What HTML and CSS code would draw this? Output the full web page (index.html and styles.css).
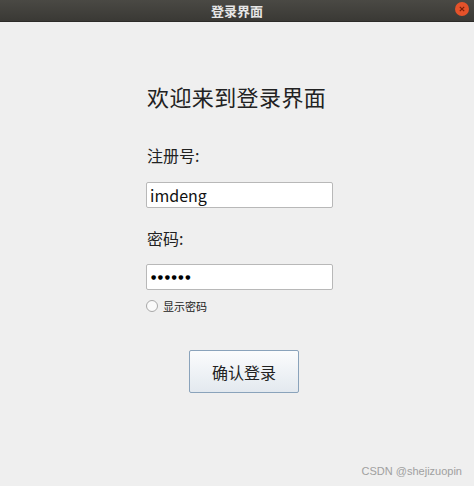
FILE: index.html
```html
<!DOCTYPE html>
<html>
<head>
<meta charset="utf-8">
<link rel="stylesheet" href="styles.css">
</head>
<body>
<div class="window">
  <div class="titlebar">
    <span class="title">登录界面</span>
    <span class="close">
      <svg width="14" height="14" viewBox="0 0 14 14"><circle cx="7" cy="7" r="7" fill="#e5522a"/><path d="M4.8 4.8 L9.2 9.2 M9.2 4.8 L4.8 9.2" stroke="#7a1e08" stroke-width="1.2"/></svg>
    </span>
  </div>
  <div class="content">
    <h1 class="heading">欢迎来到登录界面</h1>
    <div class="label label-user">注册号:</div>
    <div class="input">imdeng</div>
    <div class="label label-pass">密码:</div>
    <div class="input pass"><span class="dots">●●●●●●</span></div>
    <div class="check">
      <span class="radio"></span>
      <span class="check-text">显示密码</span>
    </div>
    <div class="btn-row">
      <div class="btn">确认登录</div>
    </div>
  </div>
  <div class="watermark">CSDN @shejizuopin</div>
</div>
</body>
</html>
```

FILE: styles.css
```css
html, body {
  margin: 0;
  padding: 0;
}
body {
  width: 474px;
  height: 486px;
  overflow: hidden;
  background: #efefef;
  font-family: "Noto Sans CJK SC", "Noto Sans", sans-serif;
}
.window {
  position: relative;
  width: 474px;
  height: 486px;
  display: flex;
  flex-direction: column;
}
.titlebar {
  height: 21px;
  background: linear-gradient(#4a4944, #3a3935);
  display: flex;
  align-items: center;
  justify-content: center;
  position: relative;
  border-bottom: 1px solid #2c2b28;
}
.title {
  color: #e6e6e6;
  font-size: 13px;
  font-weight: bold;
  line-height: 21px;
}
.close {
  position: absolute;
  right: 5px;
  top: 2px;
  width: 14px;
  height: 14px;
  display: flex;
}
.content {
  display: flex;
  flex-direction: column;
  padding-left: 146px;
}
.heading {
  margin: 59px 0 0 1px;
  font-size: 22px;
  font-weight: normal;
  color: #222;
  line-height: 30px;
  letter-spacing: 0.4px;
}
.label {
  font-size: 16px;
  color: #222;
  line-height: 22px;
  margin-left: 1px;
}
.label-user {
  margin-top: 33px;
}
.label-pass {
  margin-top: 19px;
}
.input {
  height: 24px;
  margin-top: 16px;
  background: #fff;
  border: 1px solid #b8b8b8;
  border-radius: 2px;
  font-size: 16px;
  line-height: 24px;
  padding-left: 3px;
  box-sizing: content-box;
  width: 182px;
  color: #111;
  display: flex;
  align-items: center;
}
.input.pass {
  margin-top: 15px;
}
.dots {
  font-family: "DejaVu Sans", sans-serif;
  font-size: 6px;
  letter-spacing: 1.6px;
  color: #000;
  padding-left: 1px;
}
.check {
  display: flex;
  align-items: center;
  margin-top: 9px;
  height: 14px;
}
.radio {
  width: 10px;
  height: 10px;
  border: 1px solid #a8a8a8;
  border-radius: 50%;
  background: #fafafa;
}
.check-text {
  margin-left: 5px;
  font-size: 11px;
  color: #222;
}
.btn-row {
  display: flex;
  margin-top: 37px;
  padding-left: 43px;
}
.btn {
  width: 108px;
  height: 41px;
  border: 1px solid #8aa3bb;
  border-radius: 2px;
  background: linear-gradient(#fbfcfd, #e3e9ef);
  display: flex;
  align-items: center;
  justify-content: center;
  font-size: 16px;
  color: #222;
}
.watermark {
  position: absolute;
  right: 12px;
  bottom: 9px;
  font-family: "Liberation Sans", sans-serif;
  font-size: 11px;
  color: #a0a0a0;
}
```
